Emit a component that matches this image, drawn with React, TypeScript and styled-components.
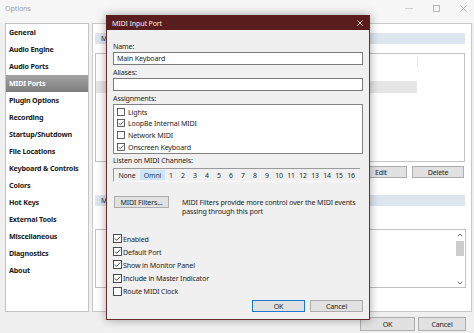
import React from 'react';
import styled, { createGlobalStyle } from 'styled-components';

const GlobalStyle = createGlobalStyle`
  html, body {
    margin: 0;
    padding: 0;
    background: #f0f0f0;
  }
  body {
    font-family: "Noto Sans", "Open Sans", sans-serif;
    color: #1e1e1e;
    letter-spacing: -0.15px;
  }
`;

const Window = styled.div`
  position: relative;
  width: 474px;
  height: 333px;
  overflow: hidden;
  background: #f0f0f0;
  display: flex;
  flex-direction: column;
`;

const TitleBar = styled.div`
  height: 23px;
  box-sizing: border-box;
  padding: 3px 7px 0 5px;
  display: flex;
  align-items: flex-start;
  background: #f6f6f6;
`;

const WindowTitle = styled.span`
  font-size: 7.2px;
  line-height: 10px;
  color: #a2a2a2;
`;

const Controls = styled.div`
  margin-left: auto;
  margin-top: 1px;
  display: flex;
  align-items: center;
  gap: 20px;
  height: 8px;
`;

const Body = styled.div`
  display: flex;
  gap: 3px;
  padding: 0 2px 0 5px;
  height: 289px;
`;

const Sidebar = styled.div`
  width: 84px;
  box-sizing: border-box;
  background: #fff;
  border: 1px solid #c4c4c4;
  display: flex;
  flex-direction: column;
`;

const NavItem = styled.div<{ $active?: boolean }>`
  height: 17px;
  line-height: 17px;
  padding-left: 3px;
  font-size: 7.2px;
  font-weight: 700;
  letter-spacing: -0.2px;
  white-space: nowrap;
  color: ${p => (p.$active ? '#fff' : '#1a1a1a')};
  background: ${p => (p.$active ? 'linear-gradient(#a3a3a3, #7d7d7d)' : 'transparent')};
`;

const Panel = styled.div`
  flex: 1;
  box-sizing: border-box;
  background: #fff;
  border: 1px solid #c9c9c9;
  padding: 9px 6px 0 2px;
  display: flex;
  flex-direction: column;
`;

const SectionHeader = styled.div<{ $top: number }>`
  margin-top: ${p => p.$top}px;
  height: 11px;
  line-height: 11px;
  padding-left: 6px;
  background: #dde6ee;
  font-size: 7.1px;
  color: #333;
`;

const ListBox = styled.div<{ $top: number; $height: number }>`
  margin-top: ${p => p.$top}px;
  height: ${p => p.$height}px;
  box-sizing: border-box;
  border: 1px solid #c2c2c2;
  background: #fff;
  display: flex;
  flex-direction: column;
`;

const ListHead = styled.div`
  height: 15px;
  display: flex;
  align-items: center;
`;

const HeadCell = styled.div`
  width: 321px;
  height: 11px;
  border-right: 1px solid #e3e3e3;
`;

const ListRow = styled.div<{ $selected?: boolean }>`
  width: 321px;
  height: 12px;
  background: ${p => (p.$selected ? '#e6e6e6' : 'transparent')};
`;

const ButtonRow = styled.div`
  margin-top: 4px;
  display: flex;
  justify-content: flex-end;
  gap: 5px;
  padding-right: 1px;
`;

const Button = styled.div<{ $w: number; $h?: number; $default?: boolean }>`
  width: ${p => p.$w}px;
  height: ${p => p.$h ?? 12}px;
  box-sizing: border-box;
  background: #e1e1e1;
  border: 1px solid ${p => (p.$default ? '#1a78d0' : '#adadad')};
  font-size: 7.1px;
  line-height: ${p => (p.$h ?? 12) - 2}px;
  text-align: center;
  color: #1e1e1e;
  white-space: nowrap;
`;

const ScrollList = styled(ListBox)`
  margin-right: -1px;
  flex-direction: row;
  justify-content: flex-end;
`;

const ScrollBar = styled.div`
  width: 10px;
  display: flex;
  flex-direction: column;
  align-items: center;
  padding: 3px 0 2px;
  box-sizing: border-box;
`;

const ScrollThumb = styled.div`
  width: 8px;
  height: 15px;
  margin-top: 4px;
  background: #cdcdcd;
`;

const Footer = styled.div`
  display: flex;
  justify-content: flex-end;
  gap: 3px;
  padding: 5px 8px 0 0;
`;

/* dialog */

const Dialog = styled.div`
  position: absolute;
  left: 106px;
  top: 15px;
  width: 264px;
  height: 305px;
  box-sizing: border-box;
  background: #f0f0f0;
  border: 1px solid #6e2b2b;
  border-top: none;
  box-shadow: 0 0 9px rgba(0, 0, 0, 0.35);
  display: flex;
  flex-direction: column;
`;

const DialogTitle = styled.div`
  height: 15px;
  margin: 0 -1px;
  padding: 0 7px 0 6px;
  background: #5a1d1e;
  display: flex;
  align-items: center;
  font-size: 7.1px;
  color: #f4e8e8;
`;

const CloseBox = styled.div`
  margin-left: auto;
  display: flex;
`;

const DialogBody = styled.div`
  flex: 1;
  display: flex;
  flex-direction: column;
  padding: 0 6px 7px 6px;
`;

const Label = styled.div<{ $top: number }>`
  margin-top: ${p => p.$top}px;
  height: 11px;
  line-height: 11px;
  font-size: 7.1px;
`;

const TextBox = styled.div`
  height: 13px;
  box-sizing: border-box;
  border: 1px solid #7a7a7a;
  background: #fff;
  padding-left: 3px;
  font-size: 7.1px;
  line-height: 11px;
`;

const AssignList = styled.div`
  height: 50px;
  box-sizing: border-box;
  border: 1px solid #828282;
  background: #fff;
  padding: 1px 3px;
`;

const CheckRow = styled.div<{ $h: number; $gap: number }>`
  height: ${p => p.$h}px;
  display: flex;
  align-items: center;
  gap: ${p => p.$gap}px;
  font-size: 7.1px;
  white-space: nowrap;
`;

const Channels = styled.div`
  margin-top: 2px;
  margin-right: 3px;
  height: 14px;
  box-sizing: border-box;
  border-top: 1px solid #9a9a9a;
  border-left: 1px solid #9a9a9a;
  border-bottom: 1px solid #fafafa;
  background: #f0f0f0;
  display: flex;
  align-items: stretch;
  padding: 1px 0;
`;

const Channel = styled.div<{ $w: number; $on?: boolean }>`
  width: ${p => p.$w}px;
  flex: none;
  font-size: 6.9px;
  line-height: 11px;
  text-align: center;
  overflow: hidden;
  background: ${p => (p.$on ? '#cce6f8' : 'transparent')};
  color: ${p => (p.$on ? '#1b3f66' : '#1e1e1e')};
`;

const FiltersRow = styled.div`
  margin-top: 14px;
  display: flex;
  align-items: flex-start;
  gap: 13px;
  padding-left: 1px;
`;

const FilterText = styled.div`
  margin-top: 2px;
  font-size: 7.1px;
  line-height: 9px;
  white-space: nowrap;
`;

const CheckGroup = styled.div`
  margin-top: 16px;
  display: flex;
  flex-direction: column;
`;

const DialogFooter = styled.div`
  margin-top: auto;
  display: flex;
  justify-content: flex-end;
  gap: 5px;
`;

function CheckBox({ size, checked }: { size: number; checked?: boolean }) {
  return (
    <svg width={size} height={size} viewBox="0 0 9 9" style={{ flex: 'none' }}>
      <rect x="0.5" y="0.5" width="8" height="8" fill="#fff" stroke="#3a3a3a" strokeWidth="0.9" />
      {checked && <polyline points="1.8,4.6 3.6,6.4 7.2,2.6" fill="none" stroke="#2a2a2a" strokeWidth="0.9" />}
    </svg>
  );
}

const navItems = [
  'General', 'Audio Engine', 'Audio Ports', 'MIDI Ports', 'Plugin Options', 'Recording',
  'Startup/Shutdown', 'File Locations', 'Keyboard & Controls', 'Colors', 'Hot Keys',
  'External Tools', 'Miscellaneous', 'Diagnostics', 'About',
];

const assignments = [
  { name: 'Lights', on: false },
  { name: 'LoopBe Internal MIDI', on: true },
  { name: 'Network MIDI', on: false },
  { name: 'Onscreen Keyboard', on: true },
];

const options = [
  { name: 'Enabled', on: true },
  { name: 'Default Port', on: true },
  { name: 'Show in Monitor Panel', on: true },
  { name: 'Include in Master Indicator', on: true },
  { name: 'Route MIDI Clock', on: false },
];

const channels = Array.from({ length: 16 }, (_, i) => String(i + 1));

export default function App() {
  return (
    <>
      <GlobalStyle />
      <Window>
        <TitleBar>
          <WindowTitle>Options</WindowTitle>
          <Controls>
            <svg width="8" height="8" viewBox="0 0 8 8">
              <line x1="0" y1="4.5" x2="8" y2="4.5" stroke="#c4c4c4" strokeWidth="0.8" />
            </svg>
            <svg width="7" height="7" viewBox="0 0 7 7">
              <rect x="0.5" y="0.5" width="6" height="6" fill="none" stroke="#a8a8a8" strokeWidth="0.8" />
            </svg>
            <svg width="7" height="7" viewBox="0 0 7 7">
              <path d="M0.5 0.5 L6.5 6.5 M6.5 0.5 L0.5 6.5" stroke="#a8a8a8" strokeWidth="0.8" />
            </svg>
          </Controls>
        </TitleBar>

        <Body>
          <Sidebar>
            {navItems.map(item => (
              <NavItem key={item} $active={item === 'MIDI Ports'}>{item}</NavItem>
            ))}
          </Sidebar>

          <Panel>
            <SectionHeader $top={0}>MIDI Inputs</SectionHeader>
            <ListBox $top={9} $height={109}>
              <ListHead><HeadCell /></ListHead>
              <ListRow />
              <ListRow $selected />
            </ListBox>
            <ButtonRow>
              <Button $w={52}>Add</Button>
              <Button $w={52}>Edit</Button>
              <Button $w={52}>Delete</Button>
            </ButtonRow>

            <SectionHeader $top={17}>MIDI Outputs</SectionHeader>
            <ScrollList $top={23} $height={59}>
              <ScrollBar>
                <svg width="6" height="4" viewBox="0 0 6 4">
                  <polyline points="0.8,3.3 3,1 5.2,3.3" fill="none" stroke="#555" strokeWidth="0.9" />
                </svg>
                <ScrollThumb />
                <svg width="6" height="4" viewBox="0 0 6 4" style={{ marginTop: 'auto' }}>
                  <polyline points="0.8,0.7 3,3 5.2,0.7" fill="none" stroke="#555" strokeWidth="0.9" />
                </svg>
              </ScrollBar>
            </ScrollList>
          </Panel>
        </Body>

        <Footer>
          <Button $w={55} $h={14}>OK</Button>
          <Button $w={48} $h={14}>Cancel</Button>
        </Footer>

        <Dialog>
          <DialogTitle>
            MIDI Input Port
            <CloseBox>
              <svg width="6" height="6" viewBox="0 0 6 6">
                <path d="M0.4 0.4 L5.6 5.6 M5.6 0.4 L0.4 5.6" stroke="#ecd2d2" strokeWidth="0.9" />
              </svg>
            </CloseBox>
          </DialogTitle>

          <DialogBody>
            <Label $top={11}>Name:</Label>
            <TextBox>Main Keyboard</TextBox>
            <Label $top={2}>Aliases:</Label>
            <TextBox />
            <Label $top={2}>Assignments:</Label>
            <AssignList>
              {assignments.map(a => (
                <CheckRow key={a.name} $h={11.6} $gap={3}>
                  <CheckBox size={8} checked={a.on} />
                  {a.name}
                </CheckRow>
              ))}
            </AssignList>
            <Label $top={1}>Listen on MIDI Channels:</Label>
            <Channels>
              <Channel $w={26}>None</Channel>
              <Channel $w={25} $on>Omni</Channel>
              {channels.map(c => (
                <Channel key={c} $w={12}>{c}</Channel>
              ))}
            </Channels>

            <FiltersRow>
              <Button $w={55}>MIDI Filters...</Button>
              <FilterText>
                MIDI Filters provide more control over the MIDI events
                <br />
                passing through this port
              </FilterText>
            </FiltersRow>

            <CheckGroup>
              {options.map(o => (
                <CheckRow key={o.name} $h={13.2} $gap={1}>
                  <CheckBox size={9} checked={o.on} />
                  {o.name}
                </CheckRow>
              ))}
            </CheckGroup>

            <DialogFooter>
              <Button $w={53} $default>OK</Button>
              <Button $w={53}>Cancel</Button>
            </DialogFooter>
          </DialogBody>
        </Dialog>
      </Window>
    </>
  );
}
